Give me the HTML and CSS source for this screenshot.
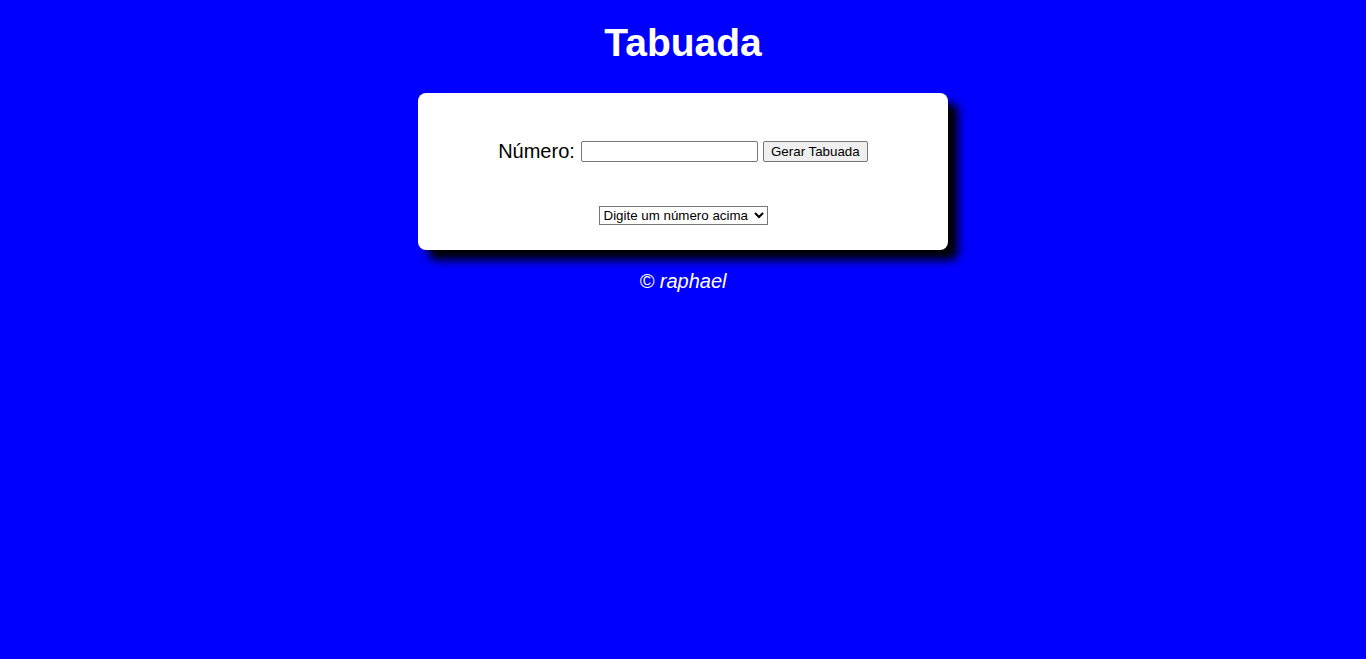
FILE: index.html
```html
<!DOCTYPE html>
<html lang="pt-BR">
<head>
    <meta charset="UTF-8">
    <meta name="viewport" content="width=device-width, initial-scale=1.0">
    <title>Tabuada</title>
    <link rel="stylesheet" href="styles.css">
</head>
<body>

<header>
    <h1>Tabuada</h1>
</header>

<section class="caixa">
    <div class="linha">
        <label for="num">Número:</label>
        <input type="number" id="num">
        <input type="button" value="Gerar Tabuada" onclick="gerar()">
    </div>
    <div class="resultado">
        <select id="tab" size="1">
            <option>Digite um número acima</option>
        </select>
    </div>
</section>

<footer>
    <p>&copy; raphael</p>
</footer>

<script>
function gerar() {
    var num = document.getElementById('num');
    var tab = document.getElementById('tab');
    if (num.value.length == 0) {
        window.alert('Por favor, digite um número!');
        return;
    }
    var n = Number(num.value);
    tab.innerHTML = '';
    for (var c = 1; c <= 10; c++) {
        var item = document.createElement('option');
        item.text = `${n} x ${c} = ${n * c}`;
        tab.appendChild(item);
    }
}
</script>

</body>
</html>
```

FILE: styles.css
```css
body {
    margin: 0;
    background-color: #0000ff;
    font-family: Arial, "Liberation Sans", sans-serif;
    font-size: 20px;
}
header h1 {
    color: white;
    text-align: center;
    font-size: 39px;
    margin: 21px 0 28px;
}
.caixa {
    background-color: white;
    width: 530px;
    box-sizing: border-box;
    margin: 0 auto;
    padding: 47px 20px 29px;
    border-radius: 8px;
    box-shadow: 10px 10px 10px black;
}
.linha {
    display: flex;
    justify-content: center;
    align-items: center;
    height: 23px;
}
.linha label {
    margin-right: 6px;
}
.linha input {
    font-family: Arial, "Liberation Sans", sans-serif;
    font-size: 13.33px;
    box-sizing: border-box;
    height: 21px;
}
#num {
    width: 177px;
    margin: 0 5px 0 0;
    padding: 1px 2px;
    border: 1px solid #767676;
    border-radius: 2px;
}
#num::-webkit-inner-spin-button {
    display: none;
}
.linha input[type=button] {
    width: 105px;
    margin: 0;
    padding: 1px 6px;
    border: 1px solid #767676;
    border-radius: 2px;
    background-color: #efefef;
    color: black;
}
.resultado {
    margin-top: 39px;
    text-align: center;
    height: 19px;
}
#tab {
    font-family: Arial, "Liberation Sans", sans-serif;
    font-size: 13.33px;
    width: 169px;
    height: 19px;
    margin: 0;
    border: 1px solid #767676;
    border-radius: 0;
    background-color: white;
    color: black;
}
footer p {
    color: white;
    text-align: center;
    font-style: italic;
    margin: 20px 0;
}
```
